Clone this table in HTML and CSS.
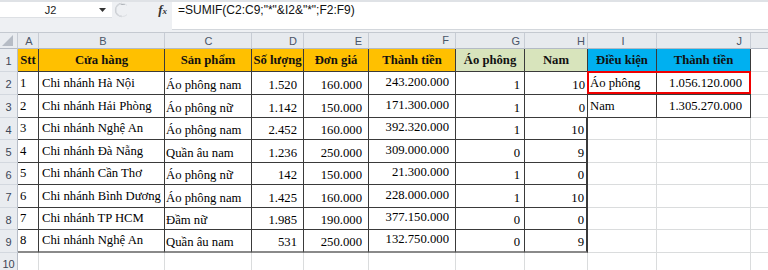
FILE: index.html
```html
<!DOCTYPE html>
<html lang="vi">
<head>
<meta charset="utf-8">
<title>SUMIF</title>
<link rel="stylesheet" href="styles.css">
</head>
<body>
<div class="bar">
  <div class="nb">
    <div class="name">J2</div>
    <svg class="arrow" width="7" height="4" viewBox="0 0 7 4"><path d="M0 0h7L3.5 4z" fill="#333"/></svg>
  </div>
  <svg class="knob" width="14" height="16" viewBox="0 0 14 16"><path d="M9 1.5A6.5 6.5 0 0 0 9 14.5" fill="none" stroke="#c4c7cc" stroke-width="1.3"/><path d="M8 2.5h4" stroke="#b0b4ba" stroke-width="1"/><circle cx="9.5" cy="8" r="6.5" fill="none" stroke="#dde0e4" stroke-width="1"/></svg>
  <div class="fx"><span class="f">f</span><span class="x">x</span></div>
  <div class="formula">=SUMIF(C2:C9;"*"&amp;I2&amp;"*";F2:F9)</div>
</div>
<div class="sheet">
  <div class="row colhdr">
    <div class="corner"><svg width="11" height="11" viewBox="0 0 11 11"><path d="M11 0V11H0z" fill="#b6bcc5"/></svg></div>
    <div>A</div><div>B</div><div>C</div><div>D</div><div>E</div><div>F</div><div>G</div><div>H</div><div>I</div><div>J</div><div></div>
  </div>
  <div class="row hdr">
    <div>1</div><div>Stt</div><div>Cửa hàng</div><div>Sản phẩm</div><div>Số lượng</div><div>Đơn giá</div><div>Thành tiền</div><div class="gr">Áo phông</div><div class="gr">Nam</div><div class="bl">Điều kiện</div><div class="bl">Thành tiền</div><div></div>
  </div>
  <div class="row data cond">
    <div>2</div><div>1</div><div>Chi nhánh Hà Nội</div><div>Áo phông nam</div><div>1.520</div><div>160.000</div><div>243.200.000</div><div>1</div><div>10</div><div class="selcell">Áo phông<span class="sel"></span></div><div>1.056.120.000</div><div></div>
  </div>
  <div class="row data cond">
    <div>3</div><div>2</div><div>Chi nhánh Hải Phòng</div><div>Áo phông nữ</div><div>1.142</div><div>150.000</div><div>171.300.000</div><div>1</div><div>0</div><div>Nam</div><div>1.305.270.000</div><div></div>
  </div>
  <div class="row data low">
    <div>4</div><div>3</div><div>Chi nhánh Nghệ An</div><div>Áo phông nam</div><div>2.452</div><div>160.000</div><div>392.320.000</div><div>1</div><div>10</div><div></div><div></div><div></div>
  </div>
  <div class="row data low">
    <div>5</div><div>4</div><div>Chi nhánh Đà Nẵng</div><div>Quần âu nam</div><div>1.236</div><div>250.000</div><div>309.000.000</div><div>0</div><div>9</div><div></div><div></div><div></div>
  </div>
  <div class="row data low">
    <div>6</div><div>5</div><div>Chi nhánh Cần Thơ</div><div>Áo phông nữ</div><div>142</div><div>150.000</div><div>21.300.000</div><div>1</div><div>0</div><div></div><div></div><div></div>
  </div>
  <div class="row data low">
    <div>7</div><div>6</div><div>Chi nhánh Bình Dương</div><div>Áo phông nam</div><div>1.425</div><div>160.000</div><div>228.000.000</div><div>1</div><div>10</div><div></div><div></div><div></div>
  </div>
  <div class="row data low">
    <div>8</div><div>7</div><div>Chi nhánh TP HCM</div><div>Đầm nữ</div><div>1.985</div><div>190.000</div><div>377.150.000</div><div>0</div><div>0</div><div></div><div></div><div></div>
  </div>
  <div class="row data low last">
    <div>9</div><div>8</div><div>Chi nhánh Nghệ An</div><div>Quần âu nam</div><div>531</div><div>250.000</div><div>132.750.000</div><div>0</div><div>9</div><div></div><div></div><div></div>
  </div>
  <div class="row">
    <div>10</div><div></div><div></div><div></div><div></div><div></div><div></div><div></div><div></div><div></div><div></div><div></div>
  </div>
</div>
</body>
</html>
```

FILE: styles.css
```css
* { box-sizing: border-box; }
html, body { margin: 0; padding: 0; background: #fff; overflow: hidden; }
body { font-family: "Liberation Serif", "Times New Roman", serif; width: 768px; height: 270px; }

/* formula bar */
.bar {
  display: flex;
  align-items: flex-start;
  height: 33px;
  background: #eef0f3;
  border-top: 2px solid #dfe2e6;
  border-bottom: 1px solid #c4c9d0;
}
.nb {
  display: flex;
  align-items: center;
  width: 112px;
  height: 16px;
  background: #fff;
  border-bottom: 1px solid #dde0e4;
}
.name {
  flex: 1;
  text-align: center;
  font-family: "Liberation Sans", Arial, sans-serif;
  font-size: 11px;
  color: #222;
  padding-left: 2px;
}
.arrow { margin-right: 6px; }
.knob { margin-left: 1px; }
.fx {
  width: 45px;
  height: 16px;
  display: flex;
  justify-content: flex-end;
  align-items: baseline;
  padding-right: 5px;
  font-family: "Liberation Serif", serif;
  font-style: italic;
  color: #333;
}
.fx .f { font-size: 13px; font-weight: bold; }
.fx .x { font-size: 9px; font-weight: bold; }
.formula {
  flex: 1;
  height: 28px;
  background: #fff;
  font-family: "Liberation Sans", Arial, sans-serif;
  font-size: 12px;
  color: #111;
  padding: 1px 0 0 6px;
  line-height: 15px;
  border-bottom: 1px solid #d3d7dc;
}

/* sheet */
.sheet {
  display: grid;
  grid-template-columns: 18px 21px 126px 87px 52px 65px 87px 69px 63px 69px 94px 1fr;
  grid-template-rows: 16px 23px 23px 23px 22px 23px 22px 23px 22px 23px 20px;
}
.row { display: contents; }
.row > div {
  display: flex;
  align-items: center;
  white-space: nowrap;
  border-right: 1px solid #dadcdd;
  border-bottom: 1px solid #dadcdd;
  font-size: 12.7px;
  color: #000;
  min-width: 0;
}
.row > div:last-child { border-right: none; }

/* row headers */
.row > div:first-child {
  justify-content: center;
  padding-top: 2px;
  background: #e9ecf0;
  border-right: 1px solid #b7bdc7;
  border-bottom: 1px solid #d3d8df;
  font-family: "Liberation Sans", Arial, sans-serif;
  font-size: 11px;
  color: #3c4656;
}

/* column headers */
.colhdr > div {
  justify-content: center;
  background: #e7eaee;
  border-right: 1px solid #c7ccd4 !important;
  border-bottom: 1px solid #b3bac5 !important;
  font-family: "Liberation Sans", Arial, sans-serif;
  font-size: 11px;
  color: #4a5568;
}
.colhdr > div:last-child { border-right: none !important; }
.colhdr > .corner {
  justify-content: flex-end;
  align-items: flex-end;
  padding: 0 2px 2px 0 !important;
}

/* column alignment */
.row > :nth-child(2) { padding-left: 2px; }
.row > :nth-child(3) { padding-left: 3px; }
.row > :nth-child(4) { padding-left: 1px; align-items: flex-end; padding-bottom: 1px; }
.row > :nth-child(5) { justify-content: flex-end; padding-right: 6px; align-items: flex-end; padding-bottom: 1px; }
.row > :nth-child(6) { justify-content: flex-end; padding-right: 6px; align-items: flex-end; padding-bottom: 1px; }
.row > :nth-child(7) { justify-content: flex-end; padding-right: 6px; padding-bottom: 2px; }
.row > :nth-child(8) { justify-content: flex-end; padding-right: 4px; align-items: flex-end; padding-bottom: 1px; }
.row > :nth-child(9) { justify-content: flex-end; padding-right: 2px; align-items: flex-end; padding-bottom: 1px; }
.row > :nth-child(10) { padding-left: 2px; }
.row > :nth-child(11) { justify-content: flex-end; padding-right: 8px; }

/* table header row */
.hdr > div:not(:first-child):not(:last-child) {
  justify-content: center;
  align-items: center;
  padding: 0;
  font-weight: bold;
  background: #ffc000;
  border-color: #3a3a3a;
  color: #111;
}
.hdr > .gr { background: #d8e4bc !important; }
.hdr > .bl { background: #00b0f0 !important; }

/* dark table borders */
.data > :nth-child(n+2):nth-child(-n+9) { border-color: #3a3a3a; }
.cond > :nth-child(10), .cond > :nth-child(11) { border-color: #3a3a3a; }
.low > :nth-child(9) { border-right: 2px solid #8a8a8a; }
.last > :nth-child(n+2):nth-child(-n+9) { border-bottom: 2px solid #8a8a8a; }

/* selection box */
.selcell { position: relative; }
.sel {
  position: absolute;
  left: -1px;
  top: -1px;
  width: 164px;
  height: 23px;
  border: 2px solid #f00000;
}
```
